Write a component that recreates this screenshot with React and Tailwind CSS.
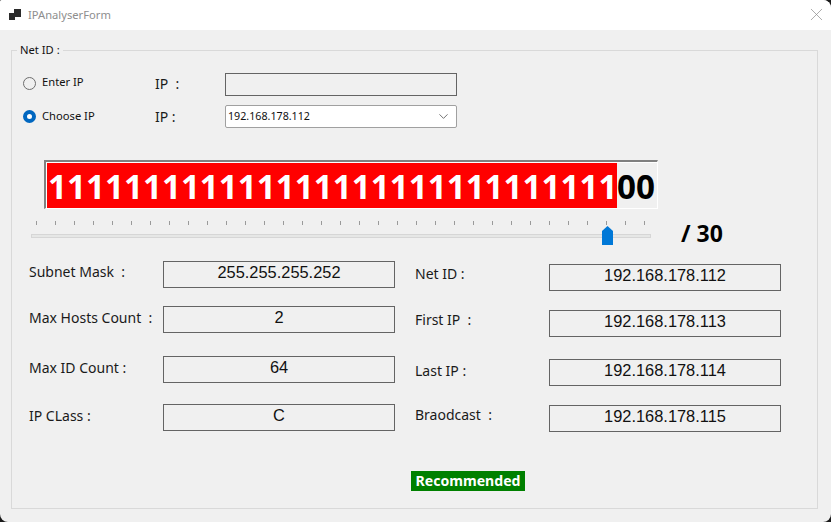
import { X, ChevronDown } from 'lucide-react';

const ticks = Array.from({ length: 33 }, (_, i) => i);

function Field({ label, value, rowClass, labelClass }) {
  return (
    <div className={`flex items-center justify-between h-[27px] ${rowClass}`}>
      <span className={`text-[14px] leading-5 text-[#1a1a1a] whitespace-pre ${labelClass}`}>{label}</span>
      <div className="w-[232px] h-[27px] border border-[#646464] text-center text-[16.4px] leading-[21px] text-[#111] font-['Liberation_Sans',sans-serif]">
        {value}
      </div>
    </div>
  );
}

export default function App() {
  return (
    <div className="w-[831px] h-[522px] bg-[#1a1a1a]">
      <div className="w-[831px] h-[522px] overflow-hidden rounded-[8px] rounded-tl-[2px] bg-[#f0f0f0] font-['Noto_Sans',sans-serif]">
        {/* Title bar */}
        <div className="h-[30px] bg-white flex items-center pl-[9px] pr-[4px]">
          <svg width="12" height="12" viewBox="0 0 12 12" className="fill-[#2b2b2b]">
            <rect x="0" y="4" width="6" height="7" />
            <rect x="5" y="0" width="7" height="8" />
          </svg>
          <span className="ml-[7px] text-[11.2px] text-[#8e8e8e]">IPAnalyserForm</span>
          <X className="ml-auto mb-[2px] w-[21px] h-[21px] text-[#8a8a8a]" strokeWidth={0.8} />
        </div>

        <div className="pl-[11px] pt-[13px]">
          <fieldset className="w-[807px] h-[466px] border border-[#d9d9d9]">
            <legend className="ml-[5px] pl-[3px] pr-[3px] text-[11.2px] leading-[14px] text-[#111]">Net ID :</legend>

            {/* IP source */}
            <div className="mt-[16px] ml-[11px] flex items-center h-[23px]">
              <span className="mb-[3px] w-[13px] h-[13px] rounded-full border border-[#6e6e6e]" />
              <span className="mb-[4px] ml-[6px] w-[113px] text-[11.2px] text-[#111]">Enter IP</span>
              <span className="mb-[2px] w-[70px] text-[14px] text-[#1a1a1a] whitespace-pre">IP  :</span>
              <div className="w-[232px] h-[23px] border border-[#646464]" />
            </div>
            <div className="mt-[9px] ml-[11px] flex items-center h-[23px]">
              <span className="w-[13px] h-[13px] rounded-full border-[4px] border-[#0067c0] bg-white" />
              <span className="ml-[6px] w-[113px] text-[11.2px] text-[#111]">Choose IP</span>
              <span className="w-[70px] text-[14px] text-[#1a1a1a]">IP :</span>
              <div className="w-[232px] h-[23px] bg-white border border-[#a0a0a0] rounded-[2px] flex items-center pl-[2px] pr-[5px]">
                <span className="text-[10.7px] text-[#111]">192.168.178.112</span>
                <ChevronDown className="ml-auto w-[15px] h-[15px] text-[#444]" strokeWidth={1.2} />
              </div>
            </div>

            {/* Bits display */}
            <div className="mt-[32px] ml-[32px] w-[614px] h-[49px] border-t-2 border-l-2 border-r border-b border-t-[#808080] border-l-[#808080] border-r-white border-b-white">
              <div className="h-[46px] border-t border-l border-white flex">
                <div className="h-[45px] w-[570px] bg-[#ff0000] text-white font-bold text-[33.2px] leading-[47px] pl-[1px] whitespace-pre">
                  111111111111111111111111111111
                </div>
                <div className="text-black font-bold text-[33.2px] leading-[47px]">00</div>
              </div>
            </div>

            {/* Mask slider */}
            <div className="mt-[12px] ml-[19px] flex">
              <div className="relative w-[620px] h-[24px]">
                <div className="flex pl-[5px]">
                  {ticks.map((t) => (
                    <span key={t} className="w-[19px] shrink-0">
                      <span className="block w-px h-[4px] bg-[#9a9a9a]" />
                    </span>
                  ))}
                </div>
                <div className="mt-[9px] h-[4px] bg-[#e6e7e6] border border-[#d6d6d6]" />
                <svg width="11" height="19" viewBox="0 0 11 19" className="absolute left-[571px] top-[5px] fill-[#0078d7]">
                  <path d="M5.5 0 L11 5 V19 H0 V5 Z" />
                </svg>
              </div>
              <span className="ml-[30px] -mt-[2px] text-[23px] leading-7 font-bold text-black whitespace-pre">/ 30</span>
            </div>

            {/* Results */}
            <div className="ml-[17px] flex gap-[20px]">
              <div className="w-[366px]">
                <Field label="Subnet Mask  :" value="255.255.255.252" rowClass="mt-[14px]" labelClass="pb-[6px]" />
                <Field label="Max Hosts Count  :" value="2" rowClass="mt-[18px]" labelClass="pb-[4px]" />
                <Field label="Max ID Count :" value="64" rowClass="mt-[23px]" labelClass="pb-[4px]" />
                <Field label="IP CLass :" value="C" rowClass="mt-[21px]" labelClass="pb-[4px]" />
              </div>
              <div className="w-[366px]">
                <Field label="Net ID :" value="192.168.178.112" rowClass="mt-[17px]" labelClass="pb-[8px]" />
                <Field label="First IP  :" value="192.168.178.113" rowClass="mt-[19px]" labelClass="pb-[8px]" />
                <Field label="Last IP :" value="192.168.178.114" rowClass="mt-[22px]" labelClass="pb-[4px]" />
                <Field label="Braodcast  :" value="192.168.178.115" rowClass="mt-[19px]" labelClass="pb-[8px]" />
              </div>
            </div>

            <div className="mt-[39px] ml-[399px] w-[114px] h-[20px] bg-[#008000] text-white font-bold text-[14.1px] leading-[20px] text-center">
              Recommended
            </div>
          </fieldset>
        </div>
      </div>
    </div>
  );
}
